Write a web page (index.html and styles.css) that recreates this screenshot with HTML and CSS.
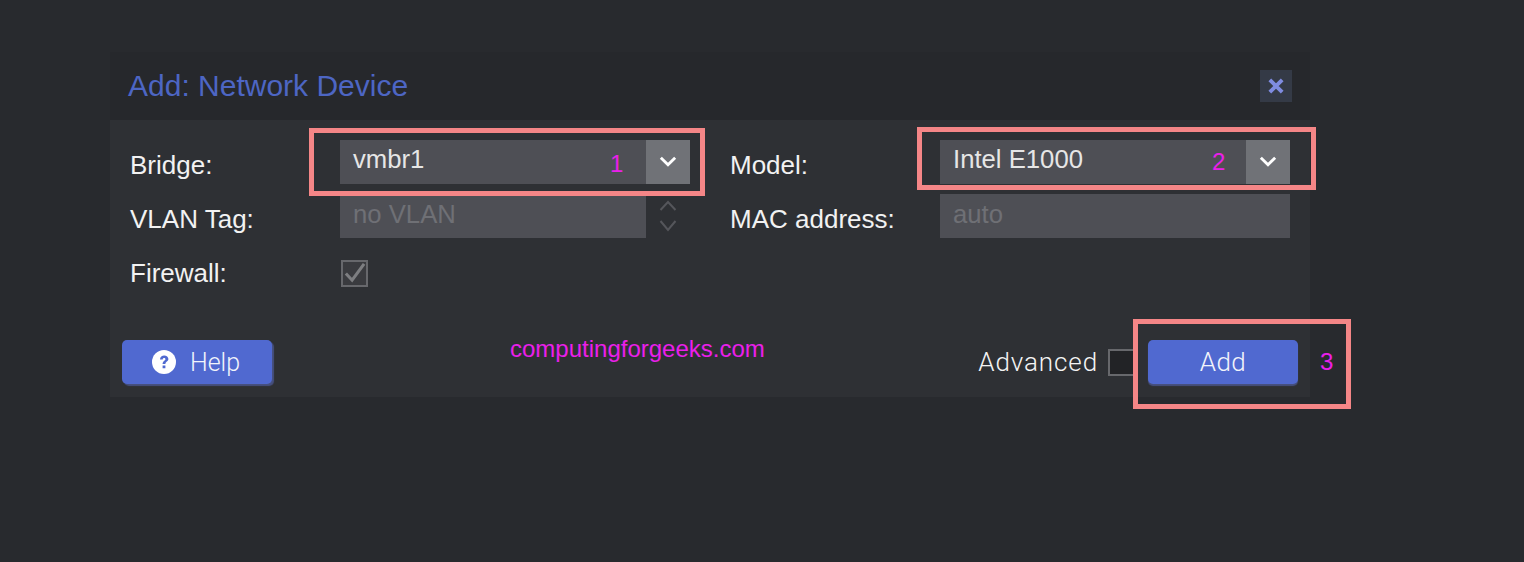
FILE: index.html
```html
<!DOCTYPE html>
<html lang="en">
<head>
<meta charset="utf-8">
<title>Add: Network Device</title>
<link rel="stylesheet" href="styles.css">
</head>
<body>
<div class="stage">
  <section class="dialog">
    <header class="head">
      <h1 class="title">Add: Network Device</h1>
      <button class="close" type="button" aria-label="Close">
        <svg viewBox="0 0 16 16" width="18" height="18"><path d="M2.5 2.5 L13.5 13.5 M13.5 2.5 L2.5 13.5" stroke="#7f8ce0" stroke-width="3.4" fill="none"/></svg>
      </button>
    </header>
    <div class="body">
      <div class="form">
        <div class="row">
          <span class="label">Bridge:</span>
          <div class="field"><span class="value">vmbr1</span><span class="trigger"><svg viewBox="0 0 16 10" width="18" height="11"><path d="M1.5 1.5 L8 8 L14.5 1.5" stroke="#fff" stroke-width="2.6" fill="none"/></svg></span></div>
        </div>
        <div class="row">
          <span class="label">Model:</span>
          <div class="field"><span class="value">Intel E1000</span><span class="trigger"><svg viewBox="0 0 16 10" width="18" height="11"><path d="M1.5 1.5 L8 8 L14.5 1.5" stroke="#fff" stroke-width="2.6" fill="none"/></svg></span></div>
        </div>
        <div class="row">
          <span class="label">VLAN Tag:</span>
          <div class="field field-off"><span class="value value-off">no VLAN</span><span class="spinner"><svg viewBox="0 0 18 32" width="18" height="32"><path d="M1.5 10 L9 2 L16.5 10 M1.5 21 L9 30 L16.5 21" stroke="#55565b" stroke-width="2" fill="none"/></svg></span></div>
        </div>
        <div class="row">
          <span class="label">MAC address:</span>
          <div class="field"><span class="value value-off">auto</span></div>
        </div>
        <div class="row row-check">
          <span class="label">Firewall:</span>
          <span class="check"><svg viewBox="0 0 24 24" width="23" height="23"><path d="M3 12 L9.5 19 L22 2" stroke="#7d7e81" stroke-width="3.2" fill="none"/></svg></span>
        </div>
      </div>
      <footer class="foot">
        <button class="btn btn-help" type="button">
          <svg viewBox="0 0 24 24" width="24" height="24"><circle cx="12" cy="12" r="12" fill="#fff"/><path d="M8 9.4 C8 6.9 10 5.4 12.2 5.4 C14.6 5.4 16.4 6.9 16.4 9 C16.4 11.6 13.4 11.7 13.4 14 H10.6 C10.6 10.8 13.4 10.7 13.4 9.2 C13.4 8.5 12.9 8 12.1 8 C11.3 8 10.8 8.6 10.7 9.4 Z M10.6 15.4 H13.4 V18.2 H10.6 Z" fill="#5069d0"/></svg>
          <span>Help</span>
        </button>
        <div class="foot-right">
          <span class="adv">Advanced</span>
          <span class="adv-box"></span>
          <button class="btn" type="button">Add</button>
        </div>
      </footer>
    </div>
  </section>
  <div class="mark mark-1"></div>
  <div class="mark mark-2"></div>
  <div class="mark mark-3"></div>
  <span class="note note-1">1</span>
  <span class="note note-2">2</span>
  <span class="note note-3">3</span>
  <span class="note note-site">computingforgeeks.com</span>
</div>
</body>
</html>
```
FILE: styles.css
```css
* { box-sizing: border-box; }
html, body { margin: 0; padding: 0; }
body {
  width: 1524px;
  height: 562px;
  overflow: hidden;
  background: #282a2e;
  font-family: "Liberation Sans", Arial, sans-serif;
}
.stage { position: relative; width: 1524px; height: 562px; padding: 52px 0 0 110px; }
.dialog { width: 1200px; height: 345px; background: #2e3034; display: flex; flex-direction: column; }
.head {
  height: 68px;
  background: #26282c;
  display: flex;
  align-items: center;
  justify-content: space-between;
  padding: 0 18px;
}
.title { margin: 0; font-size: 30px; font-weight: 400; color: #4d66c4; }
.close {
  width: 32px; height: 32px; padding: 0; border: 0;
  background: #343a46;
  display: flex; align-items: center; justify-content: center;
}
.body { flex: 1; display: flex; flex-direction: column; padding: 20px 20px 13px 20px; }
.form {
  display: grid;
  grid-template-columns: 560px 560px;
  column-gap: 40px;
  grid-auto-rows: 44px;
  row-gap: 10px;
}
.row { display: flex; align-items: center; }
.label { width: 210px; flex: none; font-size: 26px; color: #f2f2f2; padding-top: 6px; }
.field { width: 350px; height: 44px; background: #4e4f55; display: flex; align-items: stretch; }
.field-off { background: transparent; }
.field-off .value { background: #4e4f55; }
.value {
  flex: 1;
  padding: 0 0 6px 13px;
  display: flex; align-items: center;
  font-size: 25.7px;
  color: #e6e6e6;
}
.value-off { color: #6f7075; padding: 0 0 4px 13px; }
.trigger { width: 44px; flex: none; background: #707277; display: flex; align-items: center; justify-content: center; padding-bottom: 2px; }
.spinner { width: 44px; flex: none; display: flex; align-items: center; justify-content: center; }
.row-check { padding-top: 6px; }
.row-check .label { padding-top: 1px; }
.check {
  width: 27px; height: 27px;
  border: 2px solid #67686c;
  background: #3a3b3f;
  margin-left: 1px;
  display: flex; align-items: center; justify-content: center;
}
.foot { margin-top: auto; display: flex; justify-content: space-between; align-items: center; margin-left: -8px; margin-right: -8px; }
.btn {
  width: 150px; height: 44px;
  background: #5069d0;
  border: 0;
  border-radius: 5px;
  color: #f2f4fb;
  font-family: Roboto, "Liberation Sans", sans-serif;
  font-weight: 300;
  font-size: 26px;
  letter-spacing: 0.4px;
  display: flex; align-items: center; justify-content: center;
  padding: 0;
  box-shadow: 0 2px 1px #46507f;
}
.btn-help { gap: 14px; font-size: 25px; letter-spacing: 0; padding-right: 2px; box-shadow: 2px 2px 1px #46507f; }
.foot-right { display: flex; align-items: center; }
.adv { font-family: Roboto, "Liberation Sans", sans-serif; font-weight: 300; font-size: 26px; letter-spacing: 0.9px; color: #f4f4f4; }
.adv-box { width: 27px; height: 27px; border: 2px solid #67686c; background: #222326; margin-left: 10px; margin-right: 13px; }
.mark { position: absolute; border: 5px solid #f58687; }
.mark-1 { left: 309px; top: 128px; width: 396px; height: 68px; }
.mark-2 { left: 917px; top: 127px; width: 399px; height: 63px; }
.mark-3 { left: 1133px; top: 319px; width: 218px; height: 90px; }
.note { position: absolute; color: #ea1fea; font-size: 24px; line-height: 28px; }
.note-1 { left: 610px; top: 150px; }
.note-2 { left: 1212px; top: 148px; }
.note-3 { left: 1320px; top: 348px; }
.note-site { left: 510px; top: 335px; font-size: 24px; }
```
